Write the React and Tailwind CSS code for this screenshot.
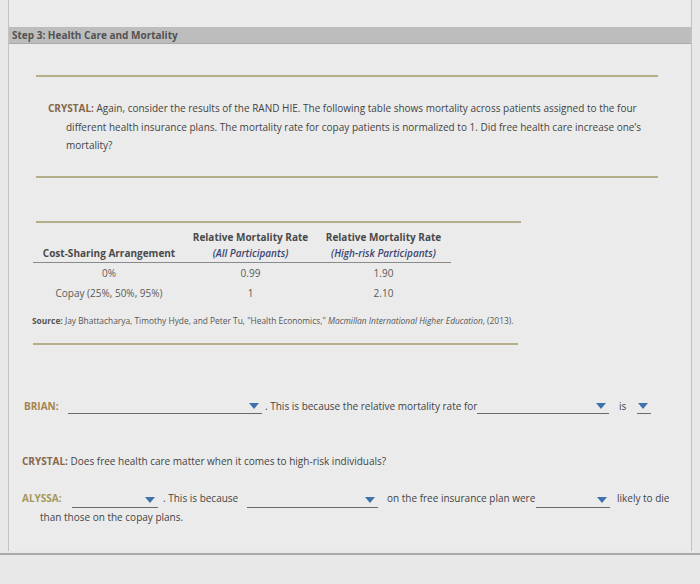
import React from 'react'

function Arrow() {
  return (
    <svg width="10" height="6" viewBox="0 0 10 6" className="shrink-0">
      <path d="M0 0 H10 L5 6 Z" fill="#3f72ad" />
    </svg>
  )
}

function Drop({ w }) {
  return (
    <span
      className="inline-flex items-center justify-end h-[15px] border-b border-[#6a6a6a] pr-[3px] shrink-0"
      style={{ width: w }}
    >
      <Arrow />
    </span>
  )
}

const rule = 'h-[2px] bg-[#b4ae8a]'

export default function App() {
  return (
    <div className="w-[700px] h-[584px] bg-[#e8e8e8] overflow-hidden font-['Open_Sans',sans-serif] text-[#444]">
      <div className="ml-[8px] w-[684px] h-[551px] border-l border-r border-[#c2c2c2] bg-[#ebebeb] pt-[27px]">
        {/* header */}
        <div className="h-[17px] bg-[#bdbdbd] border-b border-[#a9a9a9] flex items-center pl-[3px] text-[10px] font-bold text-[#525252]">
          Step 3: Health Care and Mortality
        </div>

        <div className={`${rule} mt-[31px] ml-[27px] w-[622px]`} />

        <p className="mt-[22px] ml-[39px] pl-[18px] -indent-[18px] text-[10px] leading-[18.5px] text-[#444]">
          <span className="font-bold text-[#87674a]">CRYSTAL:</span> Again, consider the results of the RAND HIE. The
          following table shows mortality across patients assigned to the four
          <br />
          different health insurance plans. The mortality rate for copay patients is normalized to 1. Did free health care
          increase one’s
          <br />
          mortality?
        </p>

        <div className={`${rule} mt-[21px] ml-[27px] w-[622px]`} />

        {/* table */}
        <div className="mt-[43px] ml-[24px]">
          <div className={`${rule} ml-[3px] w-[485px]`} />
          <div className="mt-[6px] w-[418px] text-[10px]">
            <div className="flex border-b border-[#8a8a8a] pb-[1px] leading-[16px]">
              <div className="w-[152px] flex items-end justify-center font-bold text-[#4a4a4a]">
                Cost-Sharing Arrangement
              </div>
              <div className="w-[131px] flex flex-col items-center">
                <span className="font-bold text-[#4a4a4a]">Relative Mortality Rate</span>
                <span className="italic font-semibold text-[#3d4670]">(All Participants)</span>
              </div>
              <div className="w-[135px] flex flex-col items-center">
                <span className="font-bold text-[#4a4a4a]">Relative Mortality Rate</span>
                <span className="italic font-semibold text-[#3d4670]">(High-risk Participants)</span>
              </div>
            </div>
            {[
              ['0%', '0.99', '1.90'],
              ['Copay (25%, 50%, 95%)', '1', '2.10'],
            ].map(([a, b, c]) => (
              <div key={a} className="flex leading-[20px] text-[#5a5a5a]">
                <div className="w-[152px] text-center">{a}</div>
                <div className="w-[131px] text-center">{b}</div>
                <div className="w-[135px] text-center">{c}</div>
              </div>
            ))}
          </div>
          <p className="mt-[12px] -ml-[1px] text-[8.4px] leading-[12px] text-[#555] whitespace-nowrap">
            <span className="font-bold">Source:</span> Jay Bhattacharya, Timothy Hyde, and Peter Tu, "Health Economics,"{' '}
            <span className="italic">Macmillan International Higher Education</span>, (2013).
          </p>
          <div className={`${rule} mt-[16px] w-[485px]`} />
        </div>

        {/* BRIAN */}
        <div className="mt-[53px] ml-[15px] flex items-end h-[16px] text-[10px] leading-[16px] whitespace-nowrap">
          <span className="font-bold text-[#a3844e] w-[44px]">BRIAN:</span>
          <Drop w={194} />
          <span className="ml-[3px] w-[212px] text-[#444]">. This is because the relative mortality rate for</span>
          <Drop w={132} />
          <span className="ml-[10px] w-[18px] text-[#444]">is</span>
          <Drop w={14} />
        </div>

        {/* CRYSTAL */}
        <p className="mt-[39px] ml-[13px] text-[10px] leading-[16px] text-[#444]">
          <span className="font-bold text-[#87674a]">CRYSTAL:</span> Does free health care matter when it comes to
          high-risk individuals?
        </p>

        {/* ALYSSA */}
        <div className="mt-[20px] ml-[13px] text-[10px] leading-[19px] text-[#444]">
          <div className="flex items-end h-[19px] whitespace-nowrap">
            <span className="font-bold text-[#a5985a] w-[50px]">ALYSSA:</span>
            <Drop w={86} />
            <span className="ml-[5px] w-[84px]">. This is because</span>
            <Drop w={131} />
            <span className="ml-[9px] w-[149px]">on the free insurance plan were</span>
            <Drop w={74} />
            <span className="ml-[7px]">likely to die</span>
          </div>
          <div className="ml-[18px]">than those on the copay plans.</div>
        </div>
      </div>
      <div className="mt-[2px] h-[2px] bg-[#a9a9a9]" />
    </div>
  )
}
